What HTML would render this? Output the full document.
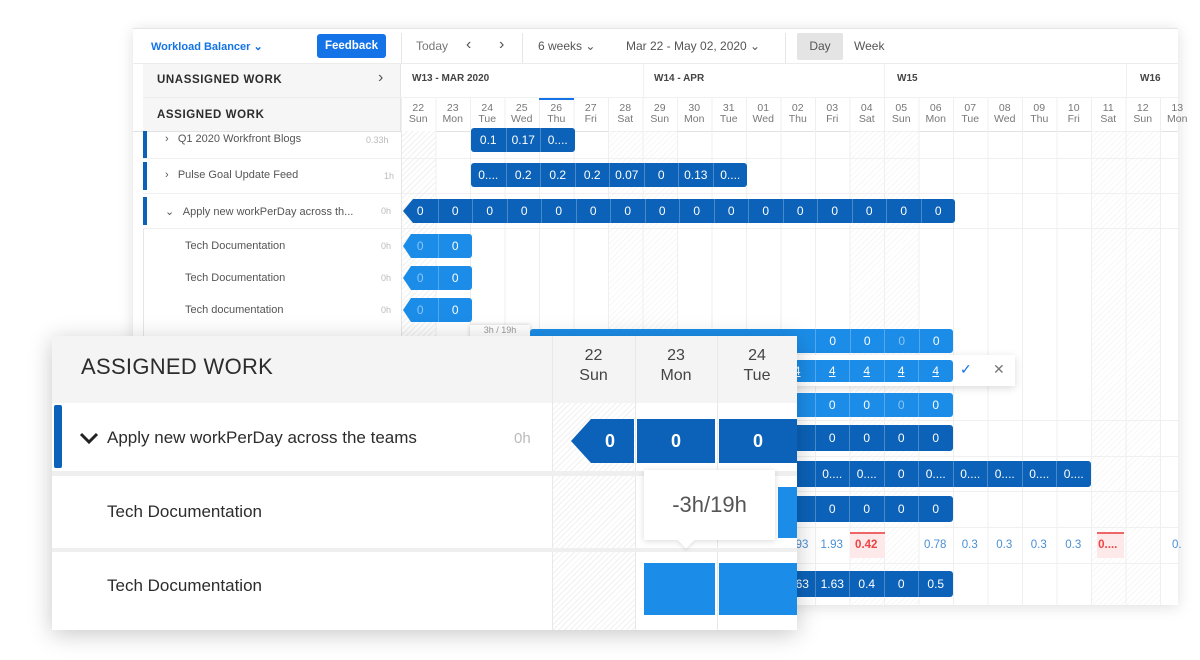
<!DOCTYPE html>
<html><head><meta charset="utf-8"><style>
*{box-sizing:border-box;margin:0;padding:0}
body{width:1200px;height:660px;background:#fff;position:relative;overflow:hidden;font-family:"Liberation Sans",sans-serif;color:#333}
.a{position:absolute}
.bk{left:133px;top:28px;width:1045px;height:577px;background:#fff;box-shadow:0 2px 14px rgba(0,0,0,.13);border-top:1px solid #e4e4e4}
.hatch{background:repeating-linear-gradient(135deg,#f1f1f1 0 1px,#fff 1px 4px)}
.vl{width:1px;background:#f0f0f0}
.hl{height:1px;background:#ececec}
.t11{font-size:11px}
.bar{display:flex;height:24px;border-radius:3px;overflow:hidden}
.bar div{width:34.5px;flex:none;color:#fff;font-size:12px;display:flex;align-items:center;justify-content:center;border-left:1px solid rgba(255,255,255,.25)}
.bar div:first-child{border-left:none}
.d{background:#0b62b8}
.l{background:#1b8de8}
.dl{font-size:10.5px;color:#777;text-align:center;width:34.5px;line-height:11px}
.tb{font-size:12px;color:#555}
</style></head><body>
<div class="a bk"></div>
<!-- toolbar -->
<div class="a" style="left:151px;top:40px;font-size:11px;font-weight:bold;color:#1473e6">Workload Balancer &#8964;</div>
<div class="a" style="left:317px;top:34px;width:69px;height:24px;background:#1473e6;border-radius:3px;color:#fff;font-size:11.5px;font-weight:bold;text-align:center;line-height:24px">Feedback</div>
<div class="a vl" style="left:401px;top:33px;height:30px;background:#e6e6e6"></div>
<div class="a tb" style="left:416px;top:39px;color:#777">Today</div>
<div class="a tb" style="left:466px;top:36px;font-size:16px">&#8249;</div>
<div class="a tb" style="left:499px;top:36px;font-size:16px">&#8250;</div>
<div class="a vl" style="left:522px;top:33px;height:30px;background:#e6e6e6"></div>
<div class="a tb" style="left:538px;top:39px">6 weeks &#8964;</div>
<div class="a tb" style="left:626px;top:39px">Mar 22 - May 02, 2020 &#8964;</div>
<div class="a vl" style="left:785px;top:33px;height:30px;background:#e6e6e6"></div>
<div class="a" style="left:797px;top:33px;width:46px;height:27px;background:#e4e4e4;border-radius:2px;font-size:12px;color:#555;text-align:center;line-height:27px">Day</div>
<div class="a tb" style="left:854px;top:39px">Week</div>
<div class="a hl" style="left:133px;top:63px;width:1045px"></div>
<!-- left header -->
<div class="a" style="left:143px;top:64px;width:258px;height:67px;background:#f6f6f6;border-right:1px solid #e6e6e6"></div>
<div class="a hl" style="left:143px;top:97px;width:258px"></div>
<div class="a hl" style="left:401px;top:97px;width:777px;background:#f0f0f0"></div>
<div class="a" style="left:157px;top:74px;font-size:11.5px;font-weight:bold;letter-spacing:.6px;color:#2c2c2c">UNASSIGNED WORK</div>
<div class="a" style="left:378px;top:69px;font-size:16px;color:#555">&#8250;</div>
<div class="a" style="left:157px;top:109px;font-size:11.5px;font-weight:bold;letter-spacing:.6px;color:#2c2c2c">ASSIGNED WORK</div>
<div class="a hl" style="left:133px;top:131px;width:1045px;background:#e2e2e2"></div>
<!-- week labels -->
<div class="a" style="left:412px;top:73px;font-size:10px;font-weight:bold;color:#444">W13 - MAR 2020</div>
<div class="a" style="left:654px;top:73px;font-size:10px;font-weight:bold;color:#444">W14 - APR</div>
<div class="a" style="left:897px;top:73px;font-size:10px;font-weight:bold;color:#444">W15</div>
<div class="a" style="left:1140px;top:73px;font-size:10px;font-weight:bold;color:#444">W16</div>
<div class="a vl" style="left:643px;top:64px;height:34px"></div>
<div class="a vl" style="left:884px;top:64px;height:34px"></div>
<div class="a vl" style="left:1126px;top:64px;height:34px"></div>
<!-- weekend hatch columns -->
<div class="a hatch" style="left:401px;top:131px;width:35px;height:474px"></div>
<div class="a hatch" style="left:608px;top:131px;width:69px;height:474px;opacity:.6"></div>
<div class="a hatch" style="left:850px;top:131px;width:69px;height:474px;opacity:.6"></div>
<div class="a hatch" style="left:1091px;top:131px;width:69px;height:474px;opacity:.6"></div>
<!-- vertical grid lines -->
<div class="a" style="left:401px;top:98px;width:777px;height:507px;background:repeating-linear-gradient(90deg,#efefef 0 1px,transparent 1px 34.5px)"></div>
<!-- day labels -->
<div class="a" style="left:401px;top:103px;display:flex">
<div class="dl">22<br>Sun</div><div class="dl">23<br>Mon</div><div class="dl">24<br>Tue</div><div class="dl">25<br>Wed</div><div class="dl" style="border-top:2px solid #1473e6;margin-top:-5px;padding-top:3px">26<br>Thu</div><div class="dl">27<br>Fri</div><div class="dl">28<br>Sat</div><div class="dl">29<br>Sun</div><div class="dl">30<br>Mon</div><div class="dl">31<br>Tue</div><div class="dl">01<br>Wed</div><div class="dl">02<br>Thu</div><div class="dl">03<br>Fri</div><div class="dl">04<br>Sat</div><div class="dl">05<br>Sun</div><div class="dl">06<br>Mon</div><div class="dl">07<br>Tue</div><div class="dl">08<br>Wed</div><div class="dl">09<br>Thu</div><div class="dl">10<br>Fri</div><div class="dl">11<br>Sat</div><div class="dl">12<br>Sun</div><div class="dl">13<br>Mon</div>
</div>
<!-- left rows -->
<div class="a" style="left:143px;top:131px;width:4px;height:27px;background:#0b62b8"></div>
<div class="a" style="left:143px;top:162px;width:4px;height:28px;background:#0b62b8"></div>
<div class="a" style="left:143px;top:197px;width:4px;height:28px;background:#0b62b8"></div>
<div class="a vl" style="left:143px;top:228px;height:110px;background:#e6e6e6"></div>
<div class="a t11" style="left:165px;top:133px;color:#555">&#8250;&nbsp;&nbsp; Q1 2020 Workfront Blogs</div>
<div class="a" style="left:366px;top:135px;font-size:9px;color:#bbb">0.33h</div>
<div class="a t11" style="left:165px;top:169px;color:#555">&#8250;&nbsp;&nbsp; Pulse Goal Update Feed</div>
<div class="a" style="left:384px;top:171px;font-size:9px;color:#bbb">1h</div>
<div class="a t11" style="left:165px;top:205px;color:#555">&#8964;&nbsp;&nbsp; Apply new workPerDay across th...</div>
<div class="a" style="left:381px;top:206px;font-size:9px;color:#bbb">0h</div>
<div class="a t11" style="left:185px;top:240px;color:#555">Tech Documentation</div>
<div class="a" style="left:381px;top:241px;font-size:9px;color:#bbb">0h</div>
<div class="a t11" style="left:185px;top:272px;color:#555">Tech Documentation</div>
<div class="a" style="left:381px;top:273px;font-size:9px;color:#bbb">0h</div>
<div class="a t11" style="left:185px;top:304px;color:#555">Tech documentation</div>
<div class="a" style="left:381px;top:305px;font-size:9px;color:#bbb">0h</div>
<div class="a hl" style="left:143px;top:158px;width:1035px;background:#f0f0f0"></div>
<div class="a hl" style="left:143px;top:193px;width:1035px;background:#f0f0f0"></div>
<div class="a hl" style="left:143px;top:228px;width:1035px;background:#f0f0f0"></div>
<div class="a vl" style="left:401px;top:131px;height:474px;background:#e6e6e6"></div>
<!-- back bars -->
<div class="a bar d" style="left:471px;top:128px"><div>0.1</div><div>0.17</div><div>0....</div></div>
<div class="a bar d" style="left:471px;top:163px"><div>0....</div><div>0.2</div><div>0.2</div><div>0.2</div><div>0.07</div><div>0</div><div>0.13</div><div>0....</div></div>
<div class="a bar d" style="left:403px;top:199px;border-radius:0 3px 3px 0;clip-path:polygon(10px 0,100% 0,100% 100%,10px 100%,0 50%)"><div>0</div><div>0</div><div>0</div><div>0</div><div>0</div><div>0</div><div>0</div><div>0</div><div>0</div><div>0</div><div>0</div><div>0</div><div>0</div><div>0</div><div>0</div><div>0</div></div>
<div class="a bar l" style="left:403px;top:234px;clip-path:polygon(8px 0,100% 0,100% 100%,8px 100%,0 50%)"><div style="color:#8cc4f4">0</div><div>0</div></div>
<div class="a bar l" style="left:403px;top:266px;clip-path:polygon(8px 0,100% 0,100% 100%,8px 100%,0 50%)"><div style="color:#8cc4f4">0</div><div>0</div></div>
<div class="a bar l" style="left:403px;top:298px;clip-path:polygon(8px 0,100% 0,100% 100%,8px 100%,0 50%)"><div style="color:#8cc4f4">0</div><div>0</div></div>
<div class="a" style="left:470px;top:325px;width:60px;height:16px;background:#fff;box-shadow:0 0 4px rgba(0,0,0,.2);font-size:9px;color:#999;text-align:center">3h / 19h</div>
<div class="a bar l" style="left:530px;top:329px"><div style="width:285px"></div><div>0</div><div>0</div><div style="color:#8cc4f4">0</div><div>0</div></div>
<div class="a" style="left:780px;top:355px;width:235px;height:31px;background:#fff;box-shadow:0 2px 8px rgba(0,0,0,.15)"></div>
<div class="a bar l" style="left:780px;top:360px;height:22px"><div style="text-decoration:underline">4</div><div style="text-decoration:underline">4</div><div style="text-decoration:underline">4</div><div style="text-decoration:underline">4</div><div style="text-decoration:underline">4</div></div>
<div class="a" style="left:960px;top:361px;font-size:14px;color:#1473e6">&#10003;</div>
<div class="a" style="left:993px;top:361px;font-size:14px;color:#777">&#10005;</div>
<div class="a bar l" style="left:780px;top:393px"><div></div><div>0</div><div>0</div><div style="color:#8cc4f4">0</div><div>0</div></div>
<div class="a bar d" style="left:780px;top:425px;height:26px"><div></div><div>0</div><div>0</div><div>0</div><div>0</div></div>
<div class="a bar d" style="left:780px;top:461px;height:26px"><div></div><div>0....</div><div>0....</div><div>0</div><div>0....</div><div>0....</div><div>0....</div><div>0....</div><div>0....</div></div>
<div class="a bar d" style="left:780px;top:496px;height:26px"><div></div><div>0</div><div>0</div><div>0</div><div>0</div></div>
<div class="a" style="left:850px;top:532px;width:35px;height:26px;background:#fde8ea;border-top:2px solid #e66"></div>
<div class="a" style="left:1097px;top:532px;width:27px;height:26px;background:#fde8ea;border-top:2px solid #e66"></div>
<div class="a" style="left:780px;top:540px;display:flex;font-size:11.5px;color:#4a8fd4">
<div class="dl" style="font-size:11.5px;color:#4a8fd4">1.93</div><div class="dl" style="font-size:11.5px;color:#4a8fd4">1.93</div><div class="dl" style="font-size:11.5px;color:#e44;font-weight:bold">0.42</div><div class="dl"></div><div class="dl" style="font-size:11.5px;color:#4a8fd4">0.78</div><div class="dl" style="font-size:11.5px;color:#4a8fd4">0.3</div><div class="dl" style="font-size:11.5px;color:#4a8fd4">0.3</div><div class="dl" style="font-size:11.5px;color:#4a8fd4">0.3</div><div class="dl" style="font-size:11.5px;color:#4a8fd4">0.3</div><div class="dl" style="font-size:11.5px;color:#e44;font-weight:bold">0....</div><div class="dl"></div><div class="dl" style="font-size:11.5px;color:#4a8fd4">0.</div></div>
<div class="a bar d" style="left:780px;top:571px;height:26px"><div>1.63</div><div>1.63</div><div>0.4</div><div>0</div><div>0.5</div></div>
<div class="a hl" style="left:797px;top:420px;width:381px;background:#f0f0f0"></div>
<div class="a hl" style="left:797px;top:456px;width:381px;background:#f0f0f0"></div>
<div class="a hl" style="left:797px;top:491px;width:381px;background:#f0f0f0"></div>
<div class="a hl" style="left:797px;top:527px;width:381px;background:#f0f0f0"></div>
<div class="a hl" style="left:797px;top:563px;width:381px;background:#f0f0f0"></div>
<!-- front panel -->
<div class="a" style="left:52px;top:336px;width:745px;height:294px;background:#fff;box-shadow:0 4px 22px rgba(0,0,0,.22)">
 <div class="a" style="left:0;top:0;width:745px;height:67px;background:#f4f4f4"></div>
 <div class="a" style="left:29px;top:18px;font-size:22px;color:#2c2c2c;letter-spacing:.3px">ASSIGNED WORK</div>
 <div class="a" style="left:500px;top:0;width:1px;height:294px;background:#e8e8e8"></div>
 <div class="a" style="left:583px;top:0;width:1px;height:294px;background:#e8e8e8"></div>
 <div class="a" style="left:665px;top:0;width:1px;height:294px;background:#e8e8e8"></div>
 <div class="a" style="left:500px;top:10px;width:83px;text-align:center;font-size:16px;color:#444;line-height:20px">22<br>Sun</div>
 <div class="a" style="left:583px;top:10px;width:82px;text-align:center;font-size:16px;color:#444;line-height:20px">23<br>Mon</div>
 <div class="a" style="left:665px;top:10px;width:80px;text-align:center;font-size:16px;color:#444;line-height:20px">24<br>Tue</div>
 <div class="a hatch" style="left:501px;top:67px;width:82px;height:227px"></div>
 <div class="a" style="left:0;top:135px;width:745px;height:5px;background:#efefef"></div>
 <div class="a" style="left:0;top:212px;width:745px;height:4px;background:#efefef"></div>
 <div class="a" style="left:2px;top:69px;width:8px;height:63px;background:#0b62b8;border-radius:2px"></div>
 <div class="a" style="left:27px;top:92px;width:22px;height:20px"><svg width="22" height="20"><path d="M2 6l8 8 8-8" stroke="#222" stroke-width="3" fill="none"/></svg></div>
 <div class="a" style="left:55px;top:92px;font-size:17px;color:#2c2c2c">Apply new workPerDay across the teams</div>
 <div class="a" style="left:462px;top:94px;font-size:15px;color:#bbb">0h</div>
 <div class="a" style="left:55px;top:166px;font-size:17px;color:#2c2c2c">Tech Documentation</div>
 <div class="a" style="left:55px;top:240px;font-size:17px;color:#2c2c2c">Tech Documentation</div>
 <div class="a" style="left:519px;top:83px;width:63px;height:44px;background:#0b62b8;clip-path:polygon(20px 0,100% 0,100% 100%,20px 100%,0 50%);color:#fff;font-size:18px;font-weight:bold;line-height:44px;text-align:right;padding-right:19px">0</div>
 <div class="a" style="left:585px;top:83px;width:78px;height:44px;background:#0b62b8;color:#fff;font-size:18px;font-weight:bold;line-height:44px;text-align:center">0</div>
 <div class="a" style="left:667px;top:83px;width:78px;height:44px;background:#0b62b8;color:#fff;font-size:18px;font-weight:bold;line-height:44px;text-align:center">0</div>
 <div class="a" style="left:726px;top:151px;width:19px;height:51px;background:#1b8de8"></div>
 <div class="a" style="left:592px;top:227px;width:71px;height:52px;background:#1b8de8"></div>
 <div class="a" style="left:667px;top:227px;width:78px;height:52px;background:#1b8de8"></div>
 <div class="a" style="left:592px;top:134px;width:131px;height:70px;background:#fff;box-shadow:0 1px 6px rgba(0,0,0,.15);font-size:22px;color:#555;text-align:center;line-height:70px">-3h/19h</div>
 <div class="a" style="left:628px;top:198px;width:12px;height:12px;background:#fff;transform:rotate(45deg);box-shadow:2px 2px 3px rgba(0,0,0,.08)"></div>
</div>
</body></html>
